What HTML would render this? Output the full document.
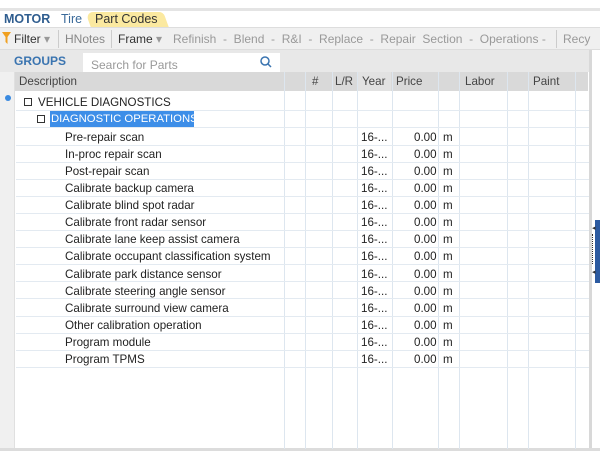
<!DOCTYPE html><html><head><style>
*{margin:0;padding:0;box-sizing:border-box}
body{width:600px;height:452px;overflow:hidden;background:#fff;font-family:"Liberation Sans",sans-serif;font-size:11.6px;color:#222;position:relative}
.a{position:absolute;white-space:nowrap}
.vl{position:absolute;width:1px;background:#dde6ef;top:93px;height:356px}
.hl{position:absolute;height:1px;background:#e3eaf1;left:16px;width:573px}
</style></head><body>
<div class="a" style="left:0;top:8px;width:600px;height:3px;background:#e4e4e4"></div>
<div class="a" style="left:4px;top:12px;font-weight:bold;color:#2f5d8f;font-size:12.5px">MOTOR</div>
<div class="a" style="left:61px;top:12px;color:#3a6a9a;font-size:12.5px">Tire</div>
<div class="a" style="left:88px;top:12px;width:78px;height:15px;background:#fbe9a0;border-radius:8px 4px 0 0;transform:skewX(20deg)"></div>
<div class="a" style="left:95px;top:12px;color:#333;font-size:12.5px">Part Codes</div>
<div class="a" style="left:0;top:27px;width:600px;height:23px;background:#f0f0f0;border-top:1px solid #ddd;border-bottom:1px solid #ddd"></div>
<svg class="a" style="left:2px;top:32px" width="9" height="12"><path d="M0 0H9L5.5 5V12L3.5 10V5Z" fill="#f0a020"/></svg>
<div class="a" style="left:14px;top:31px;line-height:16px;color:#333;font-size:12px">Filter <span style="color:#999">▾</span></div>
<div class="a" style="left:58px;top:30px;width:1px;height:18px;background:#ccc"></div>
<div class="a" style="left:65px;top:31px;line-height:16px;color:#888;font-size:12px">HNotes</div>
<div class="a" style="left:111px;top:30px;width:1px;height:18px;background:#ccc"></div>
<div class="a" style="left:118px;top:31px;line-height:16px;color:#333;font-size:12px">Frame <span style="color:#999">▾</span></div>
<div class="a" style="left:173px;top:31px;line-height:16px;color:#999;font-size:12px">Refinish &nbsp;- &nbsp;Blend &nbsp;- &nbsp;R&amp;I &nbsp;- &nbsp;Replace &nbsp;- &nbsp;Repair &nbsp;Section &nbsp;- &nbsp;Operations -</div>
<div class="a" style="left:556px;top:30px;width:1px;height:18px;background:#ccc"></div>
<div class="a" style="left:563px;top:31px;line-height:16px;color:#999;font-size:12px">Recy</div>
<div class="a" style="left:0;top:50px;width:590px;height:22px;background:#e8e8e8"></div>
<div class="a" style="left:14px;top:54px;font-weight:bold;color:#3a74b0;font-size:12px">GROUPS</div>
<div class="a" style="left:83px;top:53px;width:197px;height:19px;background:#fff"></div>
<div class="a" style="left:91px;top:58px;color:#999;font-size:12px">Search for Parts</div>
<svg class="a" style="left:260px;top:56px" width="12" height="12"><circle cx="5" cy="5" r="4" fill="none" stroke="#3a74b0" stroke-width="1.5"/><path d="M8 8L11 11" stroke="#3a74b0" stroke-width="1.5"/></svg>
<div class="a" style="left:0;top:72px;width:15px;height:377px;background:#f0f0f0;border-right:1px solid #e0e0e0"></div>
<div class="a" style="left:589px;top:50px;width:3px;height:400px;background:#d8d8d8"></div>
<div class="a" style="left:0;top:448px;width:600px;height:3px;background:#dcdcdc"></div>
<div class="a" style="left:595px;top:220px;width:5px;height:63px;background:#2c5aa0"></div>
<div class="a" style="left:592px;top:224px;font-size:7px;color:#333">◂</div>
<div class="a" style="left:592px;top:268px;font-size:7px;color:#333">◂</div>
<div class="a" style="left:592px;top:234px;width:1px;height:30px;border-left:1px dotted #333"></div>
<div class="a" style="left:15px;top:72px;width:573px;height:19px;background:#d9d9d9"></div>
<div class="a" style="left:357px;top:72px;width:34px;height:19px;background:#e2e2e2"></div>
<div class="a" style="left:19px;top:75px;color:#444">Description</div>
<div class="a" style="left:312px;top:75px;color:#444">#</div>
<div class="a" style="left:335px;top:75px;color:#444">L/R</div>
<div class="a" style="left:362px;top:75px;color:#444">Year</div>
<div class="a" style="left:396px;top:75px;color:#444">Price</div>
<div class="a" style="left:465px;top:75px;color:#444">Labor</div>
<div class="a" style="left:533px;top:75px;color:#444">Paint</div>
<div class="vl" style="left:284px;top:72px;height:377px"></div>
<div class="vl" style="left:305px;top:72px;height:377px"></div>
<div class="vl" style="left:332px;top:72px;height:377px"></div>
<div class="vl" style="left:357px;top:72px;height:377px"></div>
<div class="vl" style="left:392px;top:72px;height:377px"></div>
<div class="vl" style="left:438px;top:72px;height:377px"></div>
<div class="vl" style="left:459px;top:72px;height:377px"></div>
<div class="vl" style="left:507px;top:72px;height:377px"></div>
<div class="vl" style="left:528px;top:72px;height:377px"></div>
<div class="vl" style="left:575px;top:72px;height:377px"></div>
<div class="hl" style="top:110px"></div><div class="hl" style="top:127px"></div><div class="hl" style="top:145px"></div><div class="hl" style="top:162px"></div><div class="hl" style="top:179px"></div><div class="hl" style="top:196px"></div><div class="hl" style="top:213px"></div><div class="hl" style="top:230px"></div><div class="hl" style="top:247px"></div><div class="hl" style="top:264px"></div><div class="hl" style="top:281px"></div><div class="hl" style="top:298px"></div><div class="hl" style="top:316px"></div><div class="hl" style="top:333px"></div><div class="hl" style="top:350px"></div><div class="hl" style="top:367px"></div>
<div class="a" style="left:5px;top:95px;width:6px;height:6px;border-radius:50%;background:#3a8ae0"></div>
<div class="a" style="left:24px;top:98px;width:8px;height:8px;border:1px solid #333"></div>
<div class="a" style="left:38px;top:96px">VEHICLE DIAGNOSTICS</div>
<div class="a" style="left:37px;top:115px;width:8px;height:8px;border:1px solid #333"></div>
<div class="a" style="left:50px;top:111px;width:144px;height:16px;background:#3d8ee8"></div>
<div class="a" style="left:51px;top:113px;color:#fff;font-size:11.3px">DIAGNOSTIC OPERATIONS</div>
<div id="rows"></div>
<script>
var n=["Pre-repair scan","In-proc repair scan","Post-repair scan","Calibrate backup camera","Calibrate blind spot radar","Calibrate front radar sensor","Calibrate lane keep assist camera","Calibrate occupant classification system","Calibrate park distance sensor","Calibrate steering angle sensor","Calibrate surround view camera","Other calibration operation","Program module","Program TPMS"];
var h="";n.forEach(function(t,i){var y=130.5+i*17.14;h+='<div class="a" style="left:65px;top:'+y+'px">'+t+'</div><div class="a" style="left:361px;top:'+y+'px">16-...</div><div class="a" style="left:414px;top:'+y+'px">0.00</div><div class="a" style="left:443px;top:'+y+'px">m</div>';});
document.getElementById("rows").innerHTML=h;
</script>
</body></html>
